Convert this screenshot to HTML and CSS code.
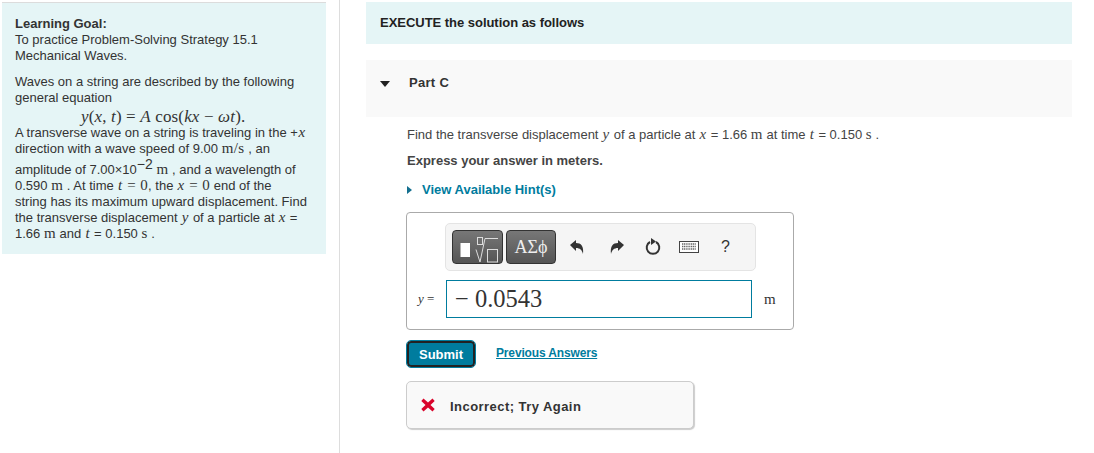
FILE: index.html
```html
<!DOCTYPE html>
<html lang="en">
<head>
	<meta charset="UTF-8">
	<title>Part C</title>
	<link rel="stylesheet" href="styles.css">
</head>
<body>
	<div class="leftcol">
		<div class="goal">
			<div class="goaltitle">Learning Goal:</div>
			<div>To practice Problem-Solving Strategy 15.1<br>Mechanical Waves.</div>
			<div class="intro">Waves on a string are described by the following<br>general equation</div>
			<div class="equation"><i>y</i>(<i>x</i>, <i>t</i>) = <i>A</i> cos(<i>kx</i> &minus; <i>&omega;t</i>).</div>
			<div>A transverse wave on a string is traveling in the +<span class="m"><i>x</i></span><br>
			direction with a wave speed of 9.00 <span class="m">m/s</span> , an<br>
			<span class="tall">amplitude of 7.00&times;10<sup>&minus;2</sup> <span class="m">m</span> , and a wavelength of</span><br>
			0.590 <span class="m">m</span> . At time <span class="m"><i>t</i> = 0</span>, the <span class="m"><i>x</i> = 0</span> end of the<br>
			string has its maximum upward displacement. Find<br>
			the transverse displacement <span class="m"><i>y</i></span> of a particle at <span class="m"><i>x</i></span> =<br>
			1.66 <span class="m">m</span> and <span class="m"><i>t</i></span> = 0.150 <span class="m">s</span> .</div>
		</div>
	</div>
	<div class="rightcol">
		<div class="execute">EXECUTE the solution as follows</div>
		<div class="parthead">
			<span class="arrowdown"></span>
			<span class="partname">Part C</span>
		</div>
		<div class="partbody">
			<p class="question">Find the transverse displacement <span class="m"><i>y</i></span> of a particle at <span class="m"><i>x</i></span> = 1.66 <span class="m">m</span> at time <span class="m"><i>t</i></span> = 0.150 <span class="m">s</span> .</p>
			<p class="express">Express your answer in meters.</p>
			<div class="hints"><span class="arrowright"></span>View Available Hint(s)</div>
			<div class="answerbox">
				<div class="toolbar">
					<div class="tbtn tbtn-math">
						<svg width="48" height="32" viewBox="0 0 48 32">
							<rect x="6.500" y="12" width="9.500" height="14" fill="#fff"/>
							<rect x="23.500" y="6.500" width="5" height="7" fill="none" stroke="#ddd"/>
							<path d="M22 18.500l4 12.500 5-23.500h13" fill="none" stroke="#ddd"/>
							<rect x="33.500" y="18.500" width="10" height="12.500" fill="none" stroke="#ddd"/>
						</svg>
					</div>
					<div class="tbtn tbtn-greek">&Alpha;&Sigma;&#981;</div>
					<svg class="ticon ticon-undo" width="16" height="16" viewBox="0 0 16 16">
						<path d="M1 6l6-5v3c5 0 8 3 7 11-1-4-3-6-7-6v3z" fill="#333"/>
					</svg>
					<svg class="ticon ticon-redo" width="16" height="16" viewBox="0 0 16 16">
						<path d="M15 6l-6-5v3c-5 0-8 3-7 11 1-4 3-6 7-6v3z" fill="#333"/>
					</svg>
					<svg class="ticon ticon-reset" width="18" height="18" viewBox="0 0 18 18">
						<path d="M6 4a6.300 6.300 0 1 0 6 0" fill="none" stroke="#333" stroke-width="2"/>
						<path d="M7 0l5 3.500-5 3.500z" fill="#333"/>
					</svg>
					<svg class="ticon ticon-keys" width="20" height="12" viewBox="0 0 20 12">
						<rect x="0.500" y="0.500" width="19" height="11" fill="#fff" stroke="#444"/>
						<path d="M3 3h14M3 5.500h14M3 8h14" stroke="#666" stroke-width="1.400" stroke-dasharray="1.200 .6"/>
					</svg>
					<span class="ticon-help">?</span>
				</div>
				<div class="inputrow">
					<span class="varlabel"><i>y</i> =</span>
					<div class="answerinput">&minus; 0.0543</div>
					<span class="unit">m</span>
				</div>
			</div>
			<div class="actions">
				<span class="submit">Submit</span>
				<a class="prev" href="#">Previous Answers</a>
			</div>
			<div class="feedback">
				<svg width="14" height="14" viewBox="0 0 14 14">
					<path d="M2.500 .5L7 4.500l4.500-4 2.200 2.500L9.500 7l4.200 4-2.200 2.500L7 9.500l-4.500 4L.3 11l4.200-4L.3 3z" fill="#d9042b"/>
				</svg>
				<span>Incorrect; Try Again</span>
			</div>
		</div>
	</div>
</body>
</html>
```

FILE: styles.css
```css
html, body {
	margin: 0;
	height: 453px;
	overflow: hidden;
}

body {
	display: flex;
	font-family: "Liberation Sans", Arial, sans-serif;
	font-size: 13px;
	line-height: 16px;
	color: #333;
	background: #fff;
}

.leftcol {
	width: 340px;
	height: 453px;
	box-sizing: border-box;
	padding: 2px 13px 0 2px;
	flex: none;
	border-right: 1px solid #ddd;
}

.goal {
	height: 252px;
	box-sizing: border-box;
	padding: 13px 0 0 13px;
	background: #e5f5f6;
	border-top: 1px solid #dcdcdc;
}

.goaltitle {
	font-weight: bold;
}

.intro {
	margin-top: 10px;
}

.equation {
	margin-left: 66px;
	font-family: "Liberation Serif", serif;
	font-size: 17px;
	letter-spacing: .15px;
	height: 19px;
	line-height: 21px;
}

.m {
	font-family: "Liberation Serif", serif;
	font-size: 15px;
	line-height: 0;
	letter-spacing: .4px;
}

.m i {
	padding: 0 .5px;
}

.tall {
	display: inline-block;
	margin: 5px 0 -1px;
}

sup {
	font-size: 14px;
	line-height: 0;
	vertical-align: 5px;
}

.rightcol {
	width: 706px;
	margin-left: 26px;
	padding-top: 2px;
}

.execute {
	height: 42px;
	box-sizing: border-box;
	padding: 13px 14px 0;
	background: #e5f5f6;
	font-weight: bold;
	letter-spacing: -.03px;
	color: #222;
}

.parthead {
	display: flex;
	height: 57px;
	margin-top: 16px;
	background: #f9f9f9;
	padding: 15px 0 0 14px;
	box-sizing: border-box;
	font-weight: bold;
}

.arrowdown {
	width: 0;
	height: 0;
	margin-top: 6px;
	border-left: 5px solid transparent;
	border-right: 5px solid transparent;
	border-top: 6px solid #222;
}

.partname {
	margin-left: 19px;
	letter-spacing: .3px;
}

.partbody {
	padding-left: 40px;
}

.question {
	margin: 10px 0 0 1px;
	color: #444;
}

.express {
	margin: 10px 0 0 1px;
	font-weight: bold;
	color: #444;
}

.hints {
	display: flex;
	align-items: center;
	margin: 13px 0 0 1px;
	font-weight: bold;
	color: #007c9e;
}

.arrowright {
	width: 0;
	height: 0;
	margin-right: 10px;
	border-top: 4px solid transparent;
	border-bottom: 4px solid transparent;
	border-left: 5px solid #136f8f;
}

.answerbox {
	width: 388px;
	height: 118px;
	box-sizing: border-box;
	margin-top: 14px;
	border: 1px solid #aaa;
	border-radius: 4px;
}

.toolbar {
	display: flex;
	align-items: center;
	width: 311px;
	height: 48px;
	box-sizing: border-box;
	margin: 10px 0 0 38px;
	padding: 0 6px;
	background: #f5f5f5;
	border: 1px solid #e4e4e4;
	border-radius: 5px;
}

.tbtn {
	display: flex;
	align-items: center;
	justify-content: center;
	height: 34px;
	box-sizing: border-box;
	background: linear-gradient(#777, #555);
	border: 1px solid #333;
	border-radius: 4px;
	color: #eee;
}

.tbtn-math {
	width: 51px;
}

.tbtn-greek {
	width: 50px;
	margin-left: 3px;
	font-family: "Liberation Serif", serif;
	font-size: 18px;
}

.ticon-undo {
	margin-left: 13px;
}

.ticon-redo {
	margin-left: 24px;
}

.ticon-reset {
	margin-left: 19px;
}

.ticon-keys {
	margin-left: 17px;
}

.ticon-help {
	margin-left: 22px;
	font-size: 16px;
}

.inputrow {
	display: flex;
	align-items: center;
	margin-top: 9px;
}

.varlabel {
	width: 39px;
	box-sizing: border-box;
	padding-left: 11px;
	font-size: 13px;
	font-family: "Liberation Serif", serif;
}

.answerinput {
	width: 306px;
	height: 38px;
	box-sizing: border-box;
	border: 1px solid #007c9e;
	padding: 10px 0 0 8px;
	font-family: "Liberation Serif", serif;
	font-size: 24.500px;
	line-height: 16px;
	color: #333;
}

.unit {
	margin-left: 12px;
	font-family: "Liberation Serif", serif;
	font-size: 15px;
}

.actions {
	display: flex;
	align-items: center;
	margin: 11px 0 0 1px;
}

.submit {
	width: 68px;
	height: 26px;
	box-sizing: border-box;
	padding-top: 4px;
	text-align: center;
	background: #007c9e;
	border: 2px solid #222;
	border-radius: 4px;
	outline: 1px solid #007c9e;
	color: #fff;
	font-weight: bold;
}

.prev {
	margin: 0 0 3px 21px;
	color: #007c9e;
	font-size: 12px;
	font-weight: bold;
	letter-spacing: -.15px;
}

.feedback {
	display: flex;
	align-items: center;
	width: 288px;
	height: 48px;
	box-sizing: border-box;
	margin-top: 14px;
	padding-left: 14px;
	background: #f9f9f9;
	border: 1px solid #ccc;
	border-radius: 5px;
	box-shadow: 1px 1px 1px #ccc;
	font-weight: bold;
	letter-spacing: .45px;
	color: #333;
}

.feedback span {
	margin: 3px 0 0 15px;
}
```
